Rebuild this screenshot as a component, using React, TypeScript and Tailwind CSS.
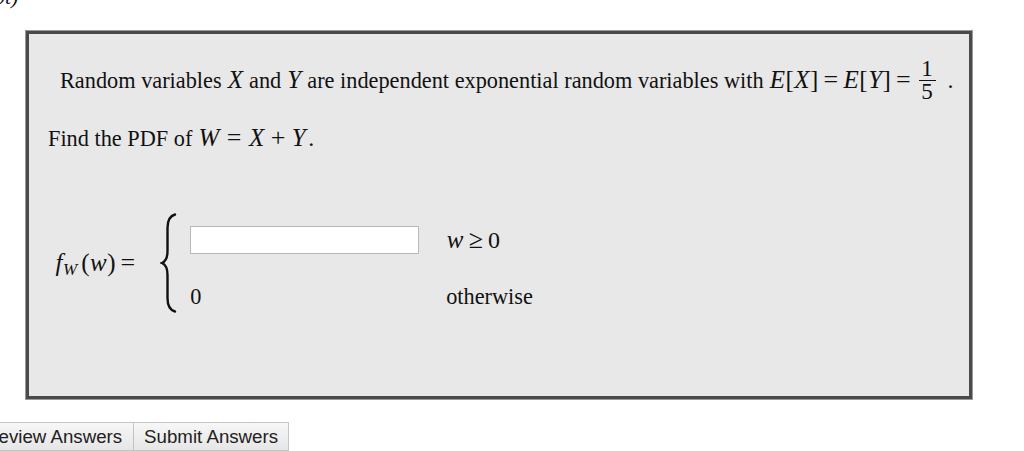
import React from "react";

const serif = { fontFamily: '"Liberation Serif", "Times New Roman", serif' };

function V({ children }: { children: React.ReactNode }) {
  return <span className="italic text-[25px] px-[0.5px]">{children}</span>;
}

function Op({ children }: { children: React.ReactNode }) {
  return <span className="mx-[5px] text-[26px]">{children}</span>;
}

function Brace() {
  return (
    <svg width="18" height="100" viewBox="0 0 18 100" className="shrink-0">
      <path
        d="M15 1.5 C9.5 3 7.5 7 7.5 15 L7.5 38 C7.5 45 5.5 48.5 2 50 C5.5 51.5 7.5 55 7.5 62 L7.5 85 C7.5 93 9.5 97 15 98.5"
        fill="none"
        stroke="#111"
        strokeWidth="2.4"
        strokeLinecap="round"
      />
    </svg>
  );
}

export default function App() {
  return (
    <div className="w-[1024px] h-[451px] overflow-hidden bg-white text-[#111]" style={serif}>
      <div className="h-[31px] overflow-hidden">
        <p className="-mt-[14px] -ml-[6px] italic text-[22px] leading-[22px]">pt)</p>
      </div>

      <div className="ml-[26px] w-[946px] h-[368px] border-[3px] border-[#4a4a4a] outline outline-1 outline-[#9a9a9a] bg-[#e8e8e8]">
        <div className="mt-[22px] ml-[31px] h-[48px] flex items-center text-[22.3px] leading-[24px] whitespace-nowrap">
          <span>
            Random variables <V>X</V> and <V>Y</V> are independent exponential random variables with{" "}
            <V>E</V>
            <span className="text-[25px]">[</span>
            <V>X</V>
            <span className="text-[25px]">]</span>
            <Op>=</Op>
            <V>E</V>
            <span className="text-[25px]">[</span>
            <V>Y</V>
            <span className="text-[25px]">]</span>
            <Op>=</Op>
          </span>
          <span className="inline-flex flex-col items-center ml-[3px] text-[23px] leading-[20px]" style={serif}>
            <span>1</span>
            <span className="w-[17px] border-t-[1.5px] border-[#111] my-[1px]"></span>
            <span>5</span>
          </span>
          <span className="ml-[12px] text-[24px]">.</span>
        </div>

        <div className="mt-[22px] ml-[19px] h-[24px] text-[22.3px] leading-[24px] whitespace-nowrap">
          Find the PDF of <V>W</V>
          <span className="mx-[7px] text-[26px]">=</span>
          <V>X</V>
          <span className="mx-[6px] text-[26px]">+</span>
          <V>Y</V>
          <span className="ml-[2px] text-[24px]">.</span>
        </div>

        <div className="mt-[63px] ml-[26px] flex items-start text-[22.3px] leading-[24px]">
          <div className="mt-[38px] whitespace-nowrap">
            <V>f</V>
            <sub className="italic text-[17px]">W</sub>
            <span className="ml-[4px] text-[25px]">(</span>
            <V>w</V>
            <span className="text-[25px]">)</span>
            <Op>=</Op>
          </div>
          <div className="ml-[20px]">
            <Brace />
          </div>
          <div className="ml-[12px] grid grid-cols-[256px_auto]">
            <div className="mt-[13px] h-[28px] w-[229px] bg-white border border-[#b8b8b8]"></div>
            <div className="mt-[15px] h-[24px] whitespace-nowrap">
              <V>w</V>
              <Op>≥</Op>
              <span className="text-[24px]">0</span>
            </div>
            <div className="mt-[31px] h-[24px]">0</div>
            <div className="mt-[31px] h-[24px]">otherwise</div>
          </div>
        </div>
      </div>

      <div
        className="mt-[23px] -ml-[27px] flex text-[18.7px] leading-[27px]"
        style={{ fontFamily: '"Liberation Sans", Arial, sans-serif' }}
      >
        <button className="h-[29px] px-[11px] border border-[#c4c4c4] bg-gradient-to-b from-[#f7f7f7] to-[#e6e6e6] text-[#222]">
          Review Answers
        </button>
        <button className="h-[29px] px-[10px] border border-l-0 border-[#c4c4c4] bg-gradient-to-b from-[#f7f7f7] to-[#e6e6e6] text-[#222]">
          Submit Answers
        </button>
      </div>
    </div>
  );
}
